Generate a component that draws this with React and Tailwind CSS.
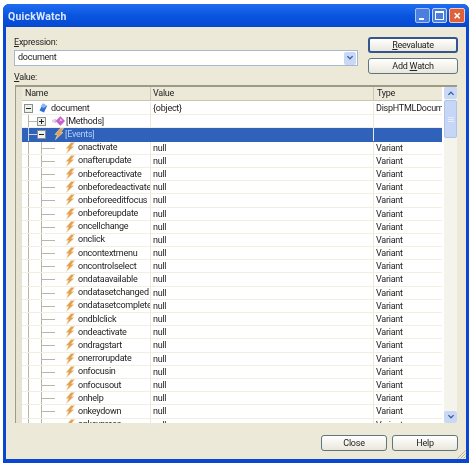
import React from "react";

const events = [
  "onactivate",
  "onafterupdate",
  "onbeforeactivate",
  "onbeforedeactivate",
  "onbeforeeditfocus",
  "onbeforeupdate",
  "oncellchange",
  "onclick",
  "oncontextmenu",
  "oncontrolselect",
  "ondataavailable",
  "ondatasetchanged",
  "ondatasetcomplete",
  "ondblclick",
  "ondeactivate",
  "ondragstart",
  "onerrorupdate",
  "onfocusin",
  "onfocusout",
  "onhelp",
  "onkeydown",
  "onkeypress",
];

const Bolt = () => (
  <svg viewBox="0 0 10 12" className="w-[10px] h-[12px] shrink-0">
    <path d="M6 0.5 L9.5 0.5 L6.5 4.5 L9 4.5 L1.5 11.5 L3.5 6.5 L1 6.5 Z" fill="#e0a050" stroke="#f5dcb0" strokeWidth="0.6" />
  </svg>
);

const Cube = () => (
  <svg viewBox="0 0 10 10" className="w-[10px] h-[10px] shrink-0">
    <path d="M5 0.5 L9 3 L6 9.5 L1.5 7.5 Z" fill="#2f6fd8" />
    <path d="M5 0.5 L9 3 L5.5 5 L2.5 3.5 Z" fill="#8fb8f0" />
  </svg>
);

const Gem = () => (
  <svg viewBox="0 0 14 10" className="w-[13px] h-[10px] shrink-0">
    <rect x="0" y="3.5" width="2" height="3" fill="#e0d0e6" />
    <rect x="2.5" y="3" width="2" height="4" fill="#d8b4e0" />
    <path d="M9 0 L14 5 L9 10 L4 5 Z" fill="#c65fc8" />
    <path d="M9 2 L11.5 4.5 L8 5.5 Z" fill="#f3b8ee" />
  </svg>
);

const Expander = ({ open }) => (
  <span className="relative z-10 w-[9px] h-[9px] shrink-0 border border-[#8a8f94] bg-[#eef0ea] flex items-center justify-center">
    <span className="block w-[5px] h-px bg-[#222]" />
    {!open && <span className="absolute block w-px h-[5px] bg-[#222]" />}
  </span>
);

const Chevron = ({ className }) => (
  <svg viewBox="0 0 10 8" className={className}>
    <path d="M1.5 1.5 L5 5 L8.5 1.5" fill="none" stroke="#3d5f9e" strokeWidth="1.8" />
  </svg>
);

const Key = ({ children }) => <span className="underline underline-offset-1">{children}</span>;

const DialogButton = ({ children, className }) => (
  <button className={`h-[16px] rounded-[3px] bg-gradient-to-b from-white to-[#e9e7dc] text-[9px] tracking-[-0.25px] leading-none text-[#222] ${className}`}>
    {children}
  </button>
);

const Row = ({ selected, value, type, children }) => (
  <div className={`flex h-[13.2px] leading-[13px] border-b ${selected ? "bg-[#2f62b8] border-[#2f62b8]" : "border-[#f1efe2]"}`}>
    <div className="relative w-[128px] shrink-0 flex items-center overflow-hidden whitespace-nowrap">{children}</div>
    <div className={`w-[223px] shrink-0 pl-[2px] border-l ${selected ? "border-[#2f62b8]" : "border-[#ece9d8]"}`}>{value}</div>
    <div className="flex-1 pl-[2px] border-l border-[#ece9d8] overflow-hidden whitespace-nowrap">{type}</div>
  </div>
);

const App = () => {
  return (
    <div className="w-[474px] h-[467px] bg-white pl-[3px] pr-[5px] pt-[4px] pb-[4px] overflow-hidden blur-[0.5px] font-['Roboto','Liberation_Sans',sans-serif] text-[9px] tracking-[-0.25px] text-[#222]">
      <div className="w-full h-full flex flex-col rounded-t-[6px] bg-[#0a47d0] overflow-hidden">
        {/* title bar */}
        <div className="h-[23px] shrink-0 flex items-center justify-between pl-[5px] pr-[4px] bg-gradient-to-b from-[#1f6df0] via-[#0a55e0] to-[#0548d0]">
          <span className="text-[#dce8ff] text-[10.5px] font-bold pt-[3px] tracking-[0.2px]">QuickWatch</span>
          <div className="flex gap-[2px]">
            <span className="w-[15px] h-[15px] rounded-[2px] bg-[#4a7fe0] border border-[#a9c4f2] flex items-end pl-[3px] pb-[2px]">
              <span className="block w-[5px] h-[2px] bg-white" />
            </span>
            <span className="w-[15px] h-[15px] rounded-[2px] bg-[#4a7fe0] border border-[#c4d6f6] p-[2px]">
              <span className="block w-full h-full border border-white border-t-2" />
            </span>
            <span className="w-[16px] h-[15px] rounded-[2px] bg-[#e0603a] border border-[#f4c8b4] flex items-center justify-center text-white text-[13px] leading-none font-bold">
              ×
            </span>
          </div>
        </div>

        {/* client area */}
        <div className="relative flex-1 min-h-0 mx-[3px] mb-[4px] bg-[#ece9d8] flex flex-col px-[8px] pt-[10px]">
          <div className="flex h-[37px] shrink-0">
            <div className="w-[344px] shrink-0">
              <div className="h-[10px] leading-[10px]"><Key>E</Key>xpression:</div>
              <div className="h-[16px] mt-[3px] bg-white border border-[#a8b8cc] flex items-center justify-between pl-[3px] pr-px">
                <span>document</span>
                <span className="w-[12px] h-[13px] rounded-[2px] bg-[#c9d9f5] flex items-center justify-center">
                  <Chevron className="w-[8px] h-[6px]" />
                </span>
              </div>
            </div>
            <div className="ml-auto w-[90px] flex flex-col gap-[5px]">
              <DialogButton className="border-2 border-[#34558f]"><Key>R</Key>eevaluate</DialogButton>
              <DialogButton className="border border-[#5f7580]">Add <Key>W</Key>atch</DialogButton>
            </div>
          </div>

          <div className="h-[11px] leading-[11px] -mt-[2px] shrink-0"><Key>V</Key>alue:</div>

          {/* watch grid */}
          <div className="h-[338px] mt-[2px] ml-px mr-px shrink-0 flex border-t-2 border-l border-[#9d9a88] bg-white overflow-hidden">
            <div className="w-[6px] shrink-0 bg-[#e6e3d2]" />
            <div className="flex-1 min-w-0 flex flex-col">
              <div className="flex h-[14px] shrink-0 bg-[#ece9d8] border-b border-[#c9c6b4] leading-[12px]">
                <div className="w-[128px] shrink-0 pl-[3px]">Name</div>
                <div className="w-[223px] shrink-0 pl-[2px] border-l border-[#c9c6b4]">Value</div>
                <div className="flex-1 pl-[3px] border-l border-[#c9c6b4]">Type</div>
              </div>
              <div className="flex-1 min-h-0 overflow-hidden pt-px">
                <Row value="{object}" type="DispHTMLDocume">
                  <span className="ml-[2px]"><Expander open /></span>
                  <span className="ml-[5px]"><Cube /></span>
                  <span className="ml-[3px]">document</span>
                </Row>
                <Row>
                  <span className="absolute left-[6px] top-0 w-px h-full bg-[#b8b6a8]" />
                  <span className="absolute left-[6px] top-[6px] w-[10px] h-px bg-[#b8b6a8]" />
                  <span className="ml-[15px]"><Expander /></span>
                  <span className="ml-[6px]"><Gem /></span>
                  <span className="ml-[1px]">[Methods]</span>
                </Row>
                <Row selected>
                  <span className="absolute left-[6px] top-0 w-px h-full bg-[#c9d4e8]" />
                  <span className="absolute left-[6px] top-[6px] w-[10px] h-px bg-[#c9d4e8]" />
                  <span className="ml-[15px]"><Expander open /></span>
                  <span className="ml-[8px]"><Bolt /></span>
                  <span className="ml-[1px] text-[#b4d0fa]">[Events]</span>
                </Row>
                {events.map((name) => (
                  <Row key={name} value="null" type="Variant">
                    <span className="absolute left-[6px] top-0 w-px h-full bg-[#b8b6a8]" />
                    <span className="absolute left-[19px] top-0 w-px h-full bg-[#b8b6a8]" />
                    <span className="absolute left-[19px] top-[6px] w-[14px] h-px bg-[#b8b6a8]" />
                    <span className="ml-[43px]"><Bolt /></span>
                    <span className="ml-[3px]">{name}</span>
                  </Row>
                ))}
              </div>
            </div>
            {/* scrollbar */}
            <div className="w-[13px] ml-[2px] shrink-0 bg-[#f4f3ec] flex flex-col">
              <div className="h-[12px] shrink-0 bg-[#c9d9f5] rounded-[2px] flex items-center justify-center">
                <Chevron className="w-[8px] h-[6px] rotate-180" />
              </div>
              <div className="h-[38px] mt-px shrink-0 bg-[#c6d6f6] border border-[#b0c4ea] rounded-[2px] flex flex-col items-center justify-center gap-px">
                <span className="block w-[6px] h-px bg-[#e8effc]" />
                <span className="block w-[6px] h-px bg-[#e8effc]" />
                <span className="block w-[6px] h-px bg-[#e8effc]" />
              </div>
              <div className="flex-1" />
              <div className="h-[12px] shrink-0 bg-[#c9d9f5] rounded-[2px] flex items-center justify-center">
                <Chevron className="w-[8px] h-[6px]" />
              </div>
            </div>
          </div>

          {/* footer */}
          <div className="flex justify-end gap-[5px] mt-[12px]">
            <DialogButton className="w-[66px] border border-[#5f7580]">Close</DialogButton>
            <DialogButton className="w-[66px] border border-[#5f7580]">Help</DialogButton>
          </div>

          {/* resize grip */}
          <svg viewBox="0 0 10 10" className="absolute right-0 bottom-0 w-[10px] h-[10px]">
            <path d="M9.5 1.5 L1.5 9.5 M9.5 4.5 L4.5 9.5 M9.5 7.5 L7.5 9.5" stroke="#b5b2a0" strokeWidth="1" />
          </svg>
        </div>
      </div>
    </div>
  );
};

export default App;
